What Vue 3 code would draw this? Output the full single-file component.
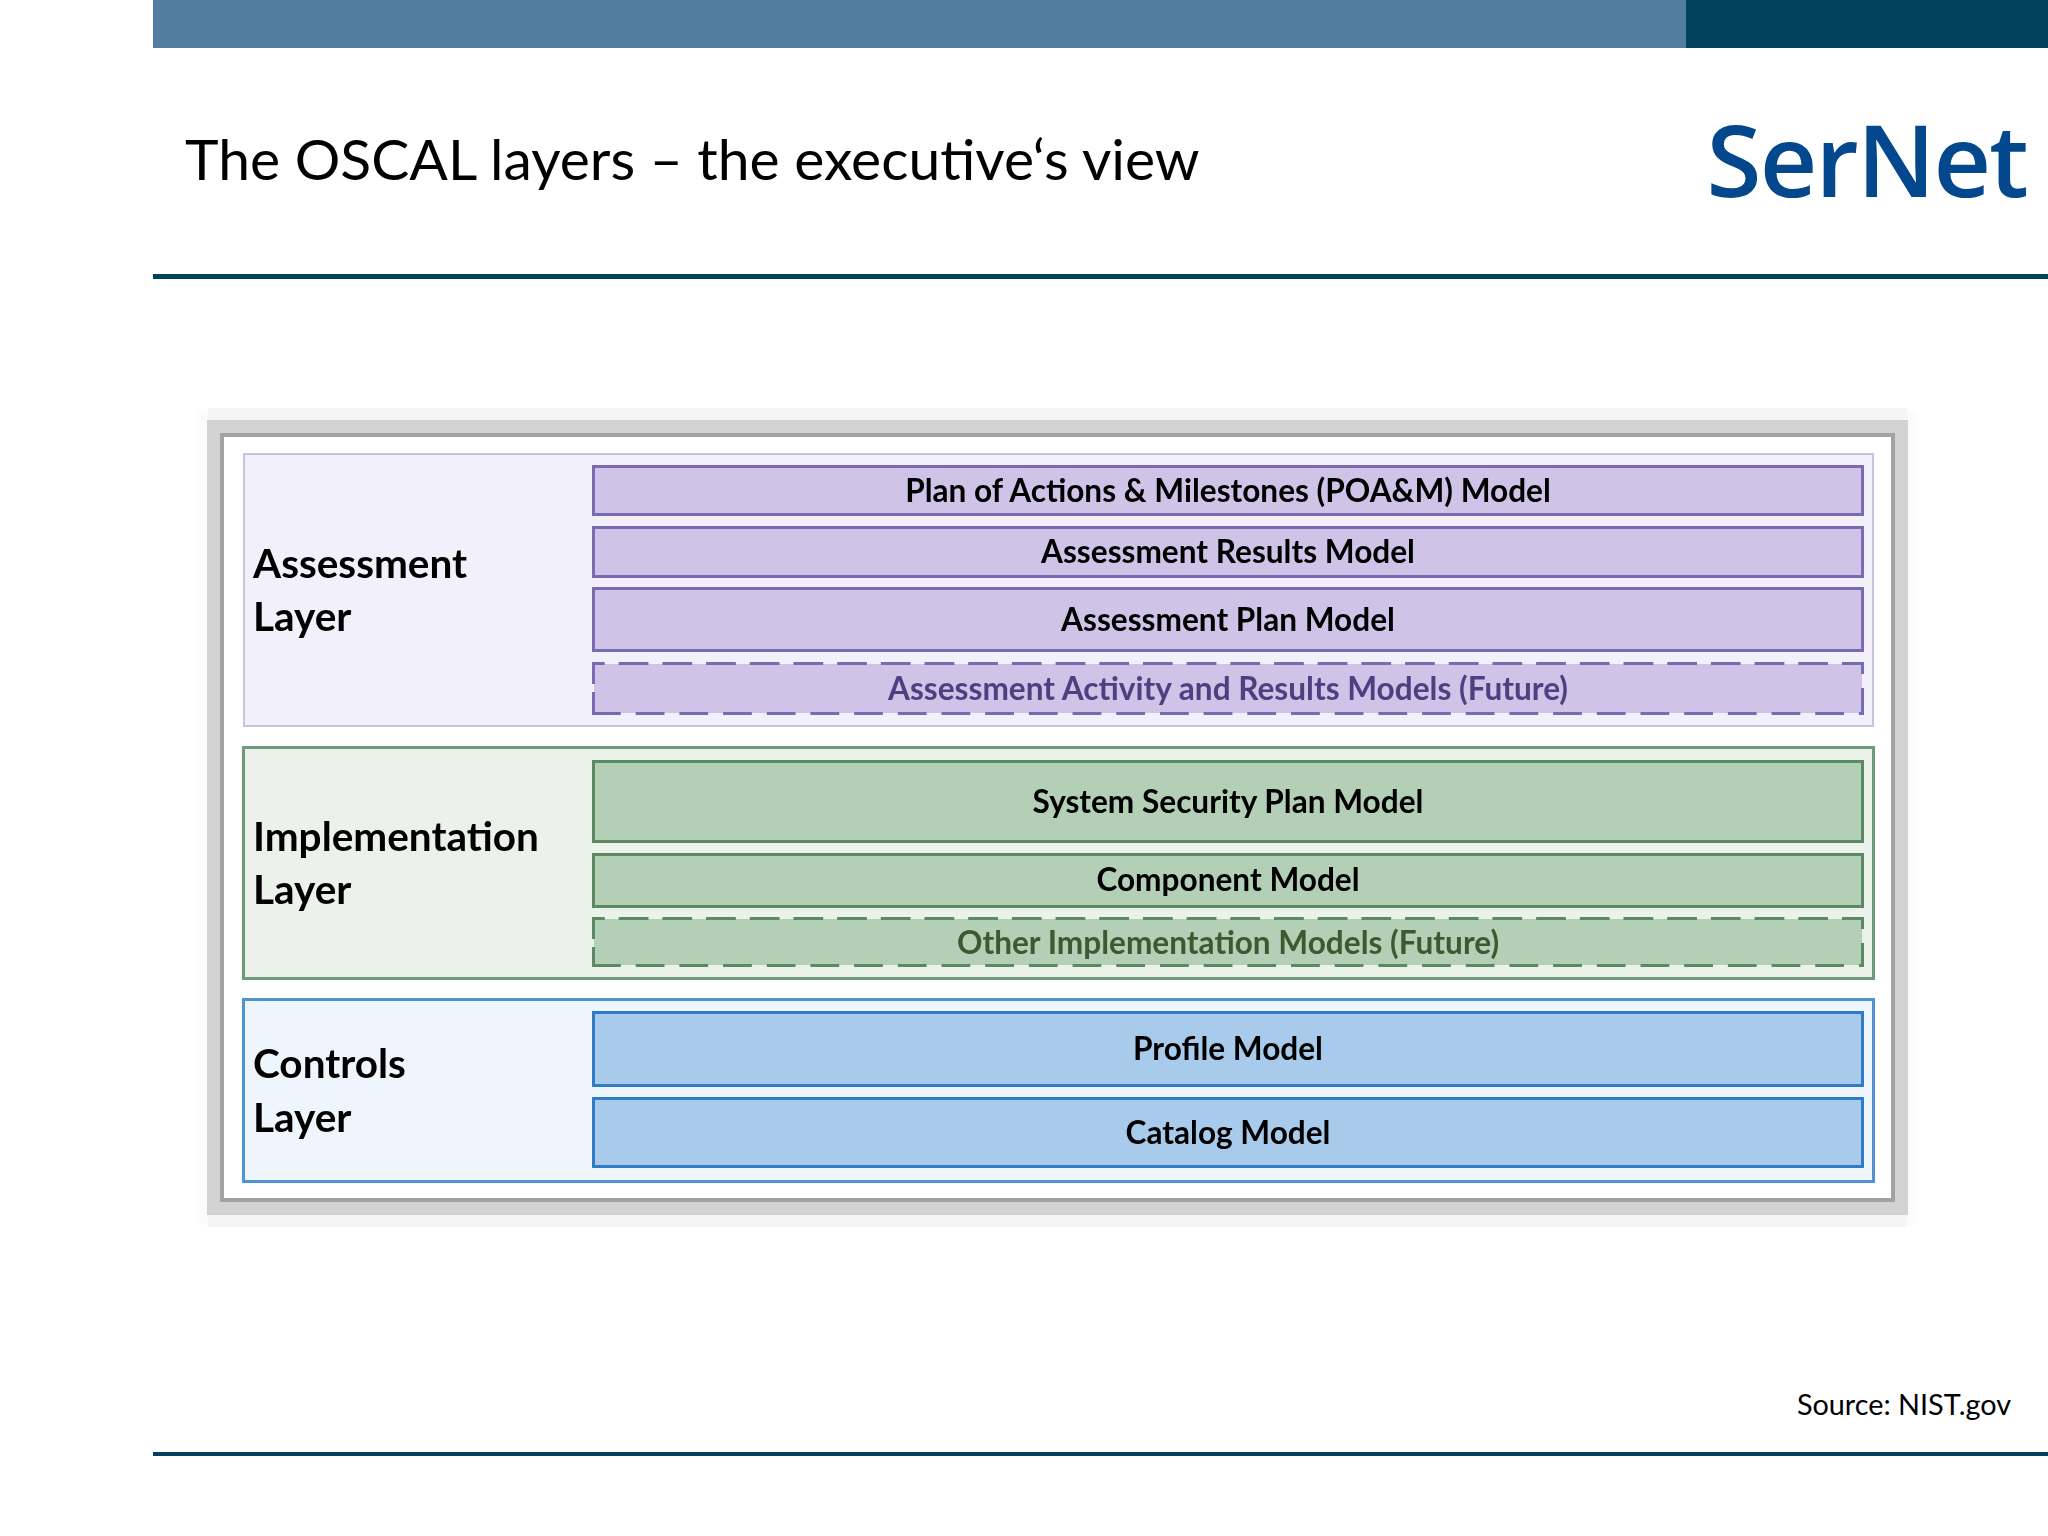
<script setup>
const layers = [
  {
    id: 'assessment',
    name: ['Assessment', 'Layer'],
    models: [
      { title: 'Plan of Actions & Milestones (POA&M) Model' },
      { title: 'Assessment Results Model' },
      { title: 'Assessment Plan Model' },
      { title: 'Assessment Activity and Results Models (Future)', future: true }
    ]
  },
  {
    id: 'implementation',
    name: ['Implementation', 'Layer'],
    models: [
      { title: 'System Security Plan Model' },
      { title: 'Component Model' },
      { title: 'Other Implementation Models (Future)', future: true }
    ]
  },
  {
    id: 'controls',
    name: ['Controls', 'Layer'],
    models: [
      { title: 'Profile Model' },
      { title: 'Catalog Model' }
    ]
  }
]
</script>

<template>
  <div class="slide">
    <div class="top-bar">
      <div class="bar-light"></div>
      <div class="bar-dark"></div>
    </div>

    <header class="slide-header">
      <h1 class="title">The OSCAL layers – the executive‘s view</h1>
      <div class="logo">SerNet</div>
    </header>

    <main class="figure-area">
      <div class="frame">
        <section v-for="layer in layers" :key="layer.id" class="layer" :class="layer.id">
          <div class="layer-name">
            <div v-for="line in layer.name" :key="line">{{ line }}</div>
          </div>
          <div class="models">
            <div
              v-for="model in layer.models"
              :key="model.title"
              class="model"
              :class="{ future: model.future }"
            >
              {{ model.title }}
            </div>
          </div>
        </section>
      </div>
      <div class="source">Source: NIST.gov</div>
    </main>

    <div class="footer-rule"></div>
  </div>
</template>

<style>
html, body {
  margin: 0;
  background: #fff;
}
</style>

<style scoped>
.slide {
  width: 1895px;
  height: 1536px;
  margin-left: 153px;
  display: flex;
  flex-direction: column;
  background: #fff;
  font-family: Lato, "Open Sans", sans-serif;
  color: #000;
}

.top-bar {
  display: flex;
  height: 48px;
  flex: none;
}

.bar-light {
  width: 1533px;
  background: #527da0;
}

.bar-dark {
  flex: 1;
  background: #03425f;
}

.slide-header {
  flex: none;
  height: 226px;
  box-sizing: border-box;
  display: flex;
  align-items: center;
  justify-content: space-between;
  padding: 0 21px 7px 32px;
}

.title {
  margin: 0;
  font-size: 57px;
  font-weight: 400;
}

.logo {
  font-family: "Open Sans", sans-serif;
  font-size: 100px;
  font-weight: 600;
  letter-spacing: -1.8px;
  color: #03478c;
}

.figure-area {
  flex: none;
  height: 1178px;
  box-sizing: border-box;
  border-top: 5px solid #03425f;
  padding: 158px 37px 28px 71px;
  display: flex;
  flex-direction: column;
  justify-content: space-between;
}

.frame {
  width: 1667px;
  height: 761px;
  box-sizing: border-box;
  padding: 16px 17px 16px 19px;
  display: flex;
  flex-direction: column;
  gap: 20px;
  background: #fff;
  box-shadow:
    0 0 0 4px #a2a2a2,
    0 0 0 17px #d2d2d2,
    0 -13px 0 16px #f5f5f5,
    0 13px 0 16px #f5f5f5,
    0 0 4px 26px #fbfbfb;
  filter: blur(0.7px);
}

.layer {
  display: flex;
  box-sizing: border-box;
  border: 2px solid var(--edge);
  background: var(--tint);
}

.assessment {
  --edge: #c9c3e3;
  --tint: #f2f0fa;
  --fill: #d0c3e8;
  --line: #7a6bb0;
  --future-text: #4f3f80;
  height: 274px;
}

.implementation {
  --edge: #6f9b78;
  --tint: #eaf2ea;
  --fill: #b3d0b7;
  --line: #5b8a62;
  --future-text: #3c5a30;
  height: 232px;
  box-shadow: 0 0 0 1px var(--edge);
}

.controls {
  --edge: #4f93d2;
  --tint: #eef5fc;
  --fill: #a9cbeb;
  --line: #2f7cc4;
  height: 183px;
  box-shadow: 0 0 0 1px var(--edge);
}

.layer-name {
  width: 347px;
  flex: none;
  box-sizing: border-box;
  padding: 0 0 2px 8px;
  display: flex;
  flex-direction: column;
  justify-content: center;
  font-size: 40.5px;
  font-weight: 700;
  line-height: 53.5px;
}

.models {
  flex: 1;
  display: grid;
  padding-right: 8px;
}

.assessment .models {
  padding-top: 10px;
  grid-template-rows: 51px 52px 65px 53px;
  row-gap: 9.5px;
}

.implementation .models {
  padding-top: 11px;
  grid-template-rows: 83px 55px 50px;
  row-gap: 9.5px;
}

.controls .models {
  padding-top: 10px;
  grid-template-rows: 76px 71px;
  row-gap: 10px;
}

.model {
  box-sizing: border-box;
  display: flex;
  align-items: center;
  justify-content: center;
  padding-bottom: 2px;
  border: 3.5px solid var(--line);
  background: var(--fill);
  font-size: 31.6px;
  font-weight: 700;
}

/* dashes are drawn by hand: border-style dashed can't give this 44px rhythm */
.model.future {
  border: 0;
  padding: 2px;
  color: var(--future-text);
  background-image:
    linear-gradient(90deg, var(--line) 29.5px, transparent 29.5px),
    linear-gradient(90deg, var(--line) 29px, transparent 29px),
    linear-gradient(180deg, var(--line) 22px, transparent 22px 30px, var(--line) 30px),
    linear-gradient(180deg, var(--line) 12px, transparent 12px 26px, var(--line) 26px),
    linear-gradient(var(--fill), var(--fill));
  background-size: 43.7px 3px, 43.7px 3px, 3px 100%, 3px 100%, auto;
  background-position: -17px 0, 0 100%, 0 0, 100% 0, 0 0;
  background-repeat: repeat-x, repeat-x, no-repeat, no-repeat, no-repeat;
  background-clip: border-box, border-box, border-box, border-box, content-box;
}

.source {
  align-self: flex-end;
  font-size: 28.8px;
  line-height: 40px;
}

.footer-rule {
  flex: none;
  height: 4px;
  background: #03425f;
}
</style>
